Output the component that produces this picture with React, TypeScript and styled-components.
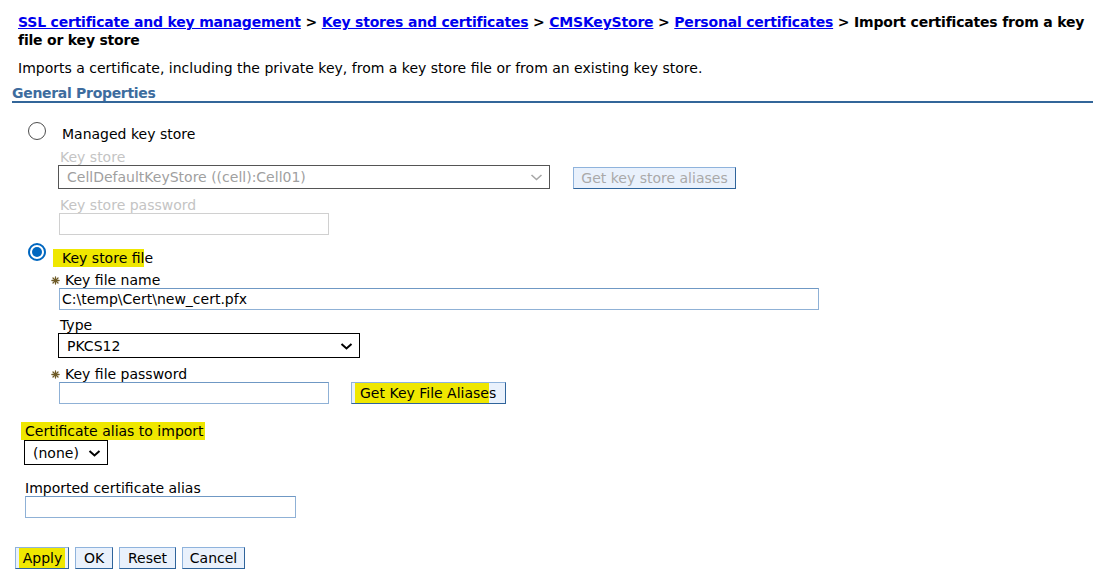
import React from "react";
import styled, { createGlobalStyle } from "styled-components";

const Global = createGlobalStyle`
  html, body { margin: 0; padding: 0; background: #fff; }
  body { font-family: "DejaVu Sans", Verdana, sans-serif; font-size: 14px; color: #000; }
  * { box-sizing: border-box; }
`;

const Page = styled.div`
  padding: 13px 0 0 0;
  width: 1093px;
`;

const Crumbs = styled.div`
  margin-left: 18px;
  font-weight: bold;
  font-size: 14px;
  line-height: 18px;
  letter-spacing: -0.2px;
  white-space: nowrap;
  a { color: #0000ee; text-decoration: underline; }
`;

const Desc = styled.div`
  margin: 11px 0 0 18px;
  line-height: 16px;
`;

const SectionTitle = styled.div`
  margin: 9px 0 0 12px;
  font-weight: bold;
  font-size: 14px;
  line-height: 16px;
  letter-spacing: -0.3px;
  color: #3d6c9e;
  border-bottom: 2px solid #336699;
`;

const Form = styled.div`
  display: flex;
  flex-direction: column;
  padding-top: 18px;
`;

const RadioRow = styled.label<{ $mt?: number }>`
  display: flex;
  align-items: center;
  height: 20px;
  margin: ${(p) => p.$mt ?? 0}px 0 0 28px;
`;

const Radio = styled.span<{ $checked?: boolean }>`
  width: 18px;
  height: 18px;
  border-radius: 50%;
  flex: none;
  border: ${(p) => (p.$checked ? "2px solid #0067c0" : "1.5px solid #4d4d4d")};
  display: flex;
  align-items: center;
  justify-content: center;
  &::after {
    content: "";
    display: ${(p) => (p.$checked ? "block" : "none")};
    width: 10px;
    height: 10px;
    border-radius: 50%;
    background: #0067c0;
  }
`;

const RadioText = styled.span<{ $pad: number; $dy: number }>`
  margin-left: ${(p) => p.$pad}px;
  line-height: 16px;
  position: relative;
  top: ${(p) => p.$dy}px;
`;

const Mark = styled.span<{ $l?: number; $r?: number; $v?: number }>`
  background: #efe700;
  padding: ${(p) => p.$v ?? 1}px ${(p) => p.$r ?? 0}px ${(p) => p.$v ?? 1}px ${(p) => p.$l ?? 0}px;
`;

const Group = styled.div<{ $left: number }>`
  display: flex;
  flex-direction: column;
  align-items: flex-start;
  margin-left: ${(p) => p.$left}px;
`;

const Label = styled.div<{ $mt?: number; $disabled?: boolean; $dx?: number }>`
  display: flex;
  align-items: center;
  line-height: 16px;
  margin-top: ${(p) => p.$mt ?? 0}px;
  margin-left: ${(p) => p.$dx ?? 0}px;
  color: ${(p) => (p.$disabled ? "#c4c4c4" : "#000")};
`;

const Req = styled.svg`
  width: 9px;
  height: 9px;
  margin: 0 5px 0 -7px;
`;

const Row = styled.div<{ $gap: number }>`
  display: flex;
  align-items: flex-start;
  gap: ${(p) => p.$gap}px;
`;

const TextInput = styled.input<{ $w: number; $disabled?: boolean }>`
  width: ${(p) => p.$w}px;
  height: 22px;
  margin: 0 0 0 1px;
  padding: 0 2px;
  font: inherit;
  font-size: 14px;
  color: #000;
  border: 1px solid ${(p) => (p.$disabled ? "#d0d0d0" : "#8fb1d6")};
  border-top-color: ${(p) => (p.$disabled ? "#d0d0d0" : "#6f98c4")};
  background: #fff;
  outline: none;
`;

const SelectWrap = styled.div<{ $w: number; $h: number; $disabled?: boolean }>`
  position: relative;
  width: ${(p) => p.$w}px;
  height: ${(p) => p.$h}px;
  border: 1px solid ${(p) => (p.$disabled ? "#555" : "#000")};
  background: #fff;
  display: flex;
  align-items: center;
  padding-left: 8px;
  color: ${(p) => (p.$disabled ? "#a0a0a0" : "#000")};
  line-height: 16px;
`;

const Chevron = styled.svg<{ $disabled?: boolean }>`
  position: absolute;
  right: 6px;
  top: 50%;
  margin-top: -5px;
  width: 13px;
  height: 10px;
  stroke: ${(p) => (p.$disabled ? "#a8a8a8" : "#000")};
`;

const Button = styled.button<{ $disabled?: boolean; $w?: number; $pl?: number; $mt?: number }>`
  height: 22px;
  ${(p) => (p.$w ? `width: ${p.$w}px;` : "")}
  margin-top: ${(p) => p.$mt ?? 0}px;
  padding: 0 0 0 ${(p) => p.$pl ?? 0}px;
  font: inherit;
  font-size: 14px;
  line-height: 16px;
  color: ${(p) => (p.$disabled ? "#a9a9a9" : "#000")};
  background: #e9f1fc;
  border: 1px solid;
  border-color: #8fb3dc #2f649b #2f649b #8fb3dc;
  display: flex;
  align-items: center;
  justify-content: ${(p) => (p.$pl !== undefined ? "flex-start" : "center")};
  white-space: nowrap;
  cursor: default;
`;

const Actions = styled.div`
  display: flex;
  gap: 6px;
  margin: 29px 0 0 15px;
`;

const Chev = ({ disabled }: { disabled?: boolean }) => (
  <Chevron $disabled={disabled} viewBox="0 0 13 10" fill="none" strokeWidth={disabled ? 1.6 : 2}>
    <path d="M1.5 3 L6.5 7.5 L11.5 3" />
  </Chevron>
);

const Star = () => (
  <Req viewBox="0 0 10 10">
    <g stroke="#6e5a26" strokeWidth="1.4" strokeLinecap="round">
      <line x1="5" y1="1" x2="5" y2="9" />
      <line x1="1" y1="5" x2="9" y2="5" />
      <line x1="2.2" y1="2.2" x2="7.8" y2="7.8" />
      <line x1="7.8" y1="2.2" x2="2.2" y2="7.8" />
    </g>
  </Req>
);

export default function App() {
  return (
    <>
      <Global />
      <Page>
        <Crumbs>
          <a href="#">SSL certificate and key management</a> &gt; <a href="#">Key stores and certificates</a> &gt;{" "}
          <a href="#">CMSKeyStore</a> &gt; <a href="#">Personal certificates</a> &gt; Import certificates from a key
          <br />
          file or key store
        </Crumbs>
        <Desc>Imports a certificate, including the private key, from a key store file or from an existing key store.</Desc>
        <SectionTitle>General Properties</SectionTitle>
        <Form>
          <RadioRow>
            <Radio />
            <RadioText $pad={16} $dy={3}>Managed key store</RadioText>
          </RadioRow>
          <Group $left={58}>
            <Label $mt={8} $disabled $dx={2}>Key store</Label>
            <Row $gap={23}>
              <SelectWrap $w={492} $h={24} $disabled>
                CellDefaultKeyStore ((cell):Cell01)
                <Chev disabled />
              </SelectWrap>
              <Button $disabled $w={163} $mt={2}>Get key store aliases</Button>
            </Row>
            <Label $mt={8} $disabled $dx={2}>Key store password</Label>
            <TextInput $w={270} $disabled />
          </Group>
          <RadioRow $mt={7}>
            <Radio $checked />
            <RadioText $pad={7} $dy={6}>
              <Mark $l={9}>Key store fil</Mark>e
            </RadioText>
          </RadioRow>
          <Group $left={58}>
            <Label $mt={10} $dx={0}>
              <Star />
              Key file name
            </Label>
            <TextInput $w={760} defaultValue="C:\temp\Cert\new_cert.pfx" />
            <Label $mt={7} $dx={2}>Type</Label>
            <SelectWrap $w={302} $h={25}>
              PKCS12
              <Chev />
            </SelectWrap>
            <Label $mt={8}>
              <Star />
              Key file password
            </Label>
            <Row $gap={22}>
              <TextInput $w={270} />
              <Button $w={155} $pl={3}>
                <Mark $l={5} $v={2}>Get Key File Aliase</Mark>s
              </Button>
            </Row>
          </Group>
          <Group $left={21}>
            <Label $mt={18}>
              <Mark $l={4} $r={1}>Certificate alias to import</Mark>
            </Label>
            <SelectWrap $w={84} $h={25} style={{ marginLeft: 3 }}>
              (none)
              <Chev />
            </SelectWrap>
            <Label $mt={15} $dx={4}>Imported certificate alias</Label>
            <TextInput $w={271} style={{ marginLeft: 4 }} />
          </Group>
          <Actions>
            <Button $w={54}>
              <Mark $l={4} $r={3} $v={2}>Apply</Mark>
            </Button>
            <Button $w={38}>OK</Button>
            <Button $w={57}>Reset</Button>
            <Button $w={63}>Cancel</Button>
          </Actions>
        </Form>
      </Page>
    </>
  );
}
